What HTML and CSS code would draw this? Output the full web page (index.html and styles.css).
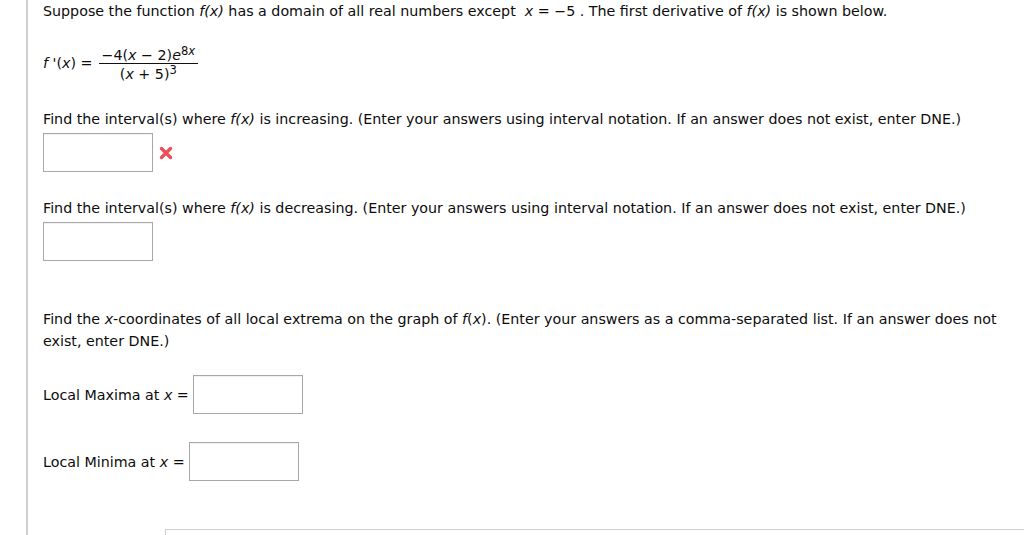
FILE: index.html
```html
<!DOCTYPE html>
<html>
<head>
<meta charset="utf-8">
<link rel="stylesheet" href="styles.css">
</head>
<body>
<div class="page">
  <div class="content">
    <p class="line intro">Suppose the function <i>f(x)</i> has a domain of all real numbers except &nbsp;<i>x</i> = &minus;5 . The first derivative of <i>f(x)</i> is shown below.</p>

    <div class="formula">
      <span class="lhs"><i>f</i> '(<i>x</i>) =</span>
      <span class="frac">
        <span class="num">&minus;4(<i>x</i> &minus; 2)<i>e</i><sup>8<i>x</i></sup></span>
        <span class="den">(<i>x</i> + 5)<sup>3</sup></span>
      </span>
    </div>

    <p class="line q1">Find the interval(s) where <i>f(x)</i> is increasing. (Enter your answers using interval notation. If an answer does not exist, enter DNE.)</p>
    <div class="answer">
      <span class="box"></span>
      <svg class="wrong" width="14" height="14" viewBox="0 0 14 14"><path d="M2.5 2.5 L11.5 11.5 M11.5 2.5 L2.5 11.5" stroke="#ee4e58" stroke-width="3.4" stroke-linecap="round"/></svg>
    </div>

    <p class="line q2">Find the interval(s) where <i>f(x)</i> is decreasing. (Enter your answers using interval notation. If an answer does not exist, enter DNE.)</p>
    <div class="answer">
      <span class="box"></span>
    </div>

    <p class="line q3">Find the <i>x</i>-coordinates of all local extrema on the graph of <i>f</i>(<i>x</i>). (Enter your answers as a comma-separated list. If an answer does not exist, enter DNE.)</p>

    <div class="labeled max">
      <span>Local Maxima at <i>x</i> =</span>
      <span class="box"></span>
    </div>
    <div class="labeled min">
      <span>Local Minima at <i>x</i> =</span>
      <span class="box"></span>
    </div>

    <div class="footer-box"></div>
  </div>
</div>
</body>
</html>
```

FILE: styles.css
```css
html, body {
  margin: 0;
  padding: 0;
  background: #fff;
}
body {
  font-family: "DejaVu Sans", Verdana, sans-serif;
  font-size: 14.25px;
  color: #0c0c0c;
  width: 1024px;
  height: 535px;
  overflow: hidden;
}
.page {
  margin-left: 26px;
  border-left: 2px solid #cfcfcf;
  height: 535px;
  box-sizing: border-box;
}
.content {
  padding-left: 15px;
  padding-right: 20px;
}
.line {
  margin: 0;
  line-height: 22px;
}
i { font-style: italic; }
.formula {
  display: flex;
  align-items: center;
  margin-top: 18px;
  height: 46px;
}
.lhs { margin-right: 6px; }
.frac {
  display: inline-flex;
  flex-direction: column;
  align-items: center;
  margin-top: 4px;
}
.num {
  border-bottom: 1px solid #111;
  padding: 0 3px 0;
  line-height: 16px;
}
.den { line-height: 20px; }
sup {
  font-size: 11.5px;
  line-height: 0;
  vertical-align: 5px;
}
.q1 { margin-top: 22px; }
.answer {
  display: flex;
  align-items: center;
  gap: 6px;
  margin-top: 3px;
}
.box {
  display: inline-block;
  width: 108px;
  height: 37px;
  border: 1px solid #a8a8a8;
  box-shadow: inset 0 1px 1px rgba(0,0,0,0.06);
  background: #fff;
}
.wrong { margin-top: 1px; }
.q2 { margin-top: 25px; }
.q3 { margin-top: 47px; }
.labeled {
  display: flex;
  align-items: center;
  gap: 4px;
}
.max { margin-top: 23px; }
.min { margin-top: 28px; }
.footer-box {
  margin-top: 48px;
  margin-left: 122px;
  margin-right: -20px;
  height: 20px;
  border-top: 1px solid #cfcfcf;
  border-left: 1px solid #cfcfcf;
}
```
